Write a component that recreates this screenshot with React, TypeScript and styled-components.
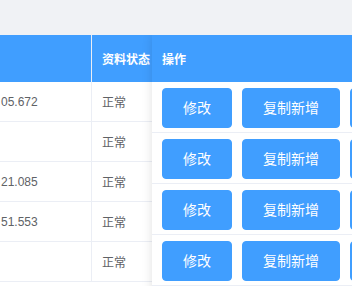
import React from "react";
import styled, { createGlobalStyle } from "styled-components";

const Global = createGlobalStyle`
  html, body { margin: 0; padding: 0; overflow: hidden; background: #ffffff; }
  * { box-sizing: border-box; }
  body { font-family: "Liberation Sans", "Noto Sans CJK SC", sans-serif; }
`;

const Page = styled.div`
  width: 352px;
  height: 286px;
  display: flex;
  flex-direction: column;
`;

const TopBar = styled.div`
  height: 35px;
  flex: none;
  background: #f0f2f5;
`;

const TableWrap = styled.div`
  position: relative;
  flex: 1;
  overflow: hidden;
  background: #fff;
`;

const MainTable = styled.div`
  display: grid;
  grid-template-columns: 92px 260px;
  width: 352px;
`;

const HeadCell = styled.div<{ $divider?: boolean }>`
  height: 47px;
  background: #409eff;
  color: #fff;
  font-size: 12px;
  font-weight: bold;
  display: flex;
  align-items: center;
  padding-left: 10px;
  border-right: ${(p) => (p.$divider ? "1px solid #ebeef5" : "none")};
  white-space: nowrap;
`;

const BodyCell = styled.div<{ $divider?: boolean; $flush?: boolean }>`
  height: 40px;
  border-bottom: 1px solid #ebeef5;
  border-right: ${(p) => (p.$divider ? "1px solid #ebeef5" : "none")};
  color: #606266;
  font-size: 12px;
  display: flex;
  align-items: center;
  padding-left: ${(p) => (p.$flush ? "1px" : "10px")};
  white-space: nowrap;
  overflow: hidden;
`;

const FixedColumn = styled.div`
  position: absolute;
  top: 0;
  left: 152px;
  width: 260px;
  background: #fff;
  box-shadow: 0 0 10px rgba(0, 0, 0, 0.12);
`;

const FixedHead = styled.div`
  height: 47px;
  background: #409eff;
  color: #fff;
  font-size: 12px;
  font-weight: bold;
  display: flex;
  align-items: center;
  padding-left: 10px;
`;

const ActionRow = styled.div`
  height: 51px;
  display: flex;
  gap: 10px;
  padding: 6px 0 4px 10px;
  border-bottom: 1px solid #ebeef5;
`;

const Button = styled.button`
  flex: none;
  height: 40px;
  padding: 0 20px;
  border: 1px solid #409eff;
  border-radius: 4px;
  background: #409eff;
  color: #fff;
  font-family: "Liberation Sans", "Noto Sans CJK SC", sans-serif;
  font-size: 14px;
  line-height: 1;
  white-space: nowrap;
  cursor: pointer;
`;

const values = ["05.672", "", "21.085", "51.553", ""];

export default function App() {
  return (
    <Page>
      <Global />
      <TopBar />
      <TableWrap>
        <MainTable>
          <HeadCell $divider />
          <HeadCell>资料状态</HeadCell>
          {values.map((v, i) => (
            <React.Fragment key={i}>
              <BodyCell $divider $flush>
                {v}
              </BodyCell>
              <BodyCell>正常</BodyCell>
            </React.Fragment>
          ))}
        </MainTable>
        <FixedColumn>
          <FixedHead>操作</FixedHead>
          {[0, 1, 2, 3, 4].map((i) => (
            <ActionRow key={i}>
              <Button>修改</Button>
              <Button>复制新增</Button>
              <Button>删除</Button>
            </ActionRow>
          ))}
        </FixedColumn>
      </TableWrap>
    </Page>
  );
}
